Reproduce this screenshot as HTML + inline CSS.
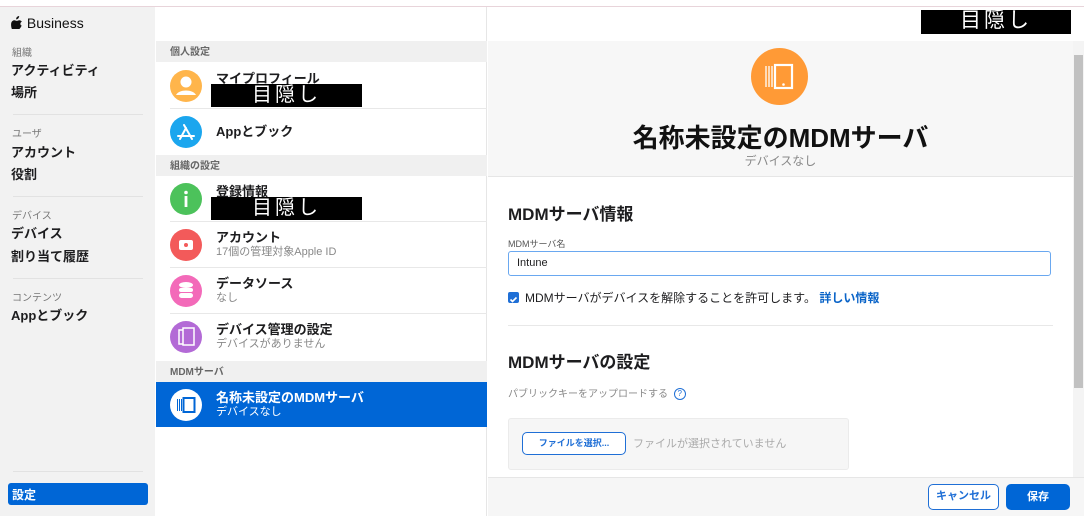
<!DOCTYPE html>
<html><head><meta charset="utf-8"><style>
*{box-sizing:border-box;margin:0;padding:0}
body{width:1084px;height:516px;overflow:hidden;background:#fff;font-family:"Liberation Sans","Noto Sans CJK JP",sans-serif;color:#1d1d1f;position:relative}
.abs{position:absolute}
.topline{left:0;top:6px;width:1084px;height:1px;background:#e8d4da}
.side{left:0;top:7px;width:155px;height:509px;background:#f2f2f2}
.side .cat{position:absolute;left:12px;font-size:10px;color:#777}
.side .it{position:absolute;left:11px;font-size:13px;font-weight:bold;color:#1d1d1f}
.side .hr{position:absolute;left:13px;width:130px;height:1px;background:#e2e2e2}
.mid{left:156px;top:7px;width:331px;height:509px;background:#fff;border-right:1px solid #e6e6e6}
.hd{position:absolute;left:0;width:331px;height:21px;background:#f0f0f0;font-size:10px;color:#666;padding:2px 14px;font-weight:bold}
.row{position:absolute;left:0;width:331px;height:45px}
.row .ic{position:absolute;left:14px;top:7px;width:32px;height:32px;border-radius:50%}
.row .t{position:absolute;left:60px;top:5px;font-size:13px;font-weight:bold}
.row .s{position:absolute;left:60px;top:21px;font-size:11px;color:#888}
.row .ln{position:absolute;left:14px;right:0;bottom:-1px;height:1px;background:#e8e8e8}
.blk{position:absolute;background:#000;color:#fff;font-size:20px;text-align:center;line-height:22px;letter-spacing:3px}
</style></head><body>
<div class="abs topline"></div>
<div class="abs side">
  <div style="position:absolute;left:11px;top:8px;font-size:14px;color:#111"><svg width="12" height="13" viewBox="0 0 12 14" style="vertical-align:-1px"><path d="M8.3 0c.1 1-.3 1.9-.9 2.6-.6.7-1.5 1.1-2.3 1-.1-.9.3-1.9.9-2.5C6.6.4 7.6 0 8.3 0zM11 10.3c-.4.9-.6 1.3-1.1 2.1-.7 1.1-1.7 2.4-2.9 2.4-1.1 0-1.4-.7-2.8-.7s-1.8.7-2.9.7C.1 14.800-.9 9.4-.1 7.2c.4-1.300 1.700-2.600 3.200-2.600 1.100 0 1.800.700 2.700.700.900 0 1.400-.700 2.700-.700 1 0 2 .500 2.700 1.400-2.400 1.300-2 4.700.800 4.300z" fill="#111"/></svg> Business</div>
  <div class="cat" style="top:37px">組織</div>
  <div class="it" style="top:53px">アクティビティ</div>
  <div class="it" style="top:75px">場所</div>
  <div class="hr" style="top:107px"></div>
  <div class="cat" style="top:118px">ユーザ</div>
  <div class="it" style="top:135px">アカウント</div>
  <div class="it" style="top:157px">役割</div>
  <div class="hr" style="top:189px"></div>
  <div class="cat" style="top:200px">デバイス</div>
  <div class="it" style="top:216px">デバイス</div>
  <div class="it" style="top:239px">割り当て履歴</div>
  <div class="hr" style="top:271px"></div>
  <div class="cat" style="top:282px">コンテンツ</div>
  <div class="it" style="top:298px">Appとブック</div>
  <div class="hr" style="top:464px"></div>
  <div style="position:absolute;left:8px;top:476px;width:140px;height:22px;background:#0066d6;border-radius:3px;color:#fff;font-size:12px;font-weight:bold;padding:3px 4px">設定</div>
</div>
<div class="abs mid">
  <div class="hd" style="top:34px">個人設定</div>
  <div class="row" style="top:56px"><div class="ic" style="background:#ffb54b"><svg width="32" height="32"><circle cx="16" cy="12" r="5.5" fill="#fff"/><path d="M6 25c3-6 17-6 20 0" fill="#fff"/></svg></div><div class="t">マイプロフィール</div><div class="ln"></div></div>
  <div class="row" style="top:102px"><div class="ic" style="background:#1ba6ee"><svg width="32" height="32" stroke="#fff" stroke-width="2" fill="none" stroke-linecap="round"><path d="M16 12l-6 11M14 9l8 14M8 20h16"/></svg></div><div class="t" style="top:12px">Appとブック</div></div>
  <div class="hd" style="top:148px">組織の設定</div>
  <div class="row" style="top:169px"><div class="ic" style="background:#4cc25b"><svg width="32" height="32"><circle cx="16" cy="9.5" r="1.8" fill="#fff"/><rect x="14.6" y="13" width="2.8" height="11" fill="#fff"/></svg></div><div class="t">登録情報</div><div class="ln"></div></div>
  <div class="row" style="top:215px"><div class="ic" style="background:#f35a5a"><svg width="32" height="32"><rect x="9" y="11" width="14" height="10" rx="2" fill="#fff"/><circle cx="16" cy="16" r="2" fill="#f35a5a"/></svg></div><div class="t">アカウント</div><div class="s">17個の管理対象Apple ID</div><div class="ln"></div></div>
  <div class="row" style="top:261px"><div class="ic" style="background:#f36ab9"><svg width="32" height="32" fill="#fff"><ellipse cx="16" cy="10" rx="7" ry="3"/><rect x="9" y="13" width="14" height="4" rx="2"/><rect x="9" y="18" width="14" height="5" rx="2.5"/></svg></div><div class="t">データソース</div><div class="s">なし</div><div class="ln"></div></div>
  <div class="row" style="top:307px"><div class="ic" style="background:#b36ad6"><svg width="32" height="32" fill="none" stroke="#fff" stroke-width="1.5"><rect x="9" y="9" width="9" height="14"/><rect x="13" y="7" width="11" height="17" fill="#b36ad6"/></svg></div><div class="t">デバイス管理の設定</div><div class="s">デバイスがありません</div></div>
  <div class="hd" style="top:354px">MDMサーバ</div>
  <div class="row" style="top:375px;background:#0066d6"><div class="ic" style="background:#fff"><svg width="32" height="32" fill="none" stroke="#0066d6" stroke-width="1"><path d="M7.5 10v12M9.5 10v12M11.5 10v12"/><rect x="13.5" y="9" width="11" height="14" stroke-width="2"/></svg></div><div class="t" style="color:#fff">名称未設定のMDMサーバ</div><div class="s" style="color:#fff">デバイスなし</div></div>
  <div class="blk" style="left:55px;top:77px;width:151px;height:23px">目隠し</div>
  <div class="blk" style="left:55px;top:190px;width:151px;height:23px">目隠し</div>
</div>
<div class="blk" style="left:921px;top:10px;width:150px;height:24px;font-size:21px">目隠し</div>
<div class="abs" style="left:488px;top:41px;width:585px;height:136px;background:#f7f7f7;border-bottom:1px solid #e6e6e6"></div>
<div class="abs" style="left:751px;top:48px;width:57px;height:57px;border-radius:50%;background:#ff9a36"><svg width="57" height="57" fill="none" stroke="#fff"><path d="M15 18v21M18 18v21M21 18v21" stroke-width="1.3"/><rect x="24" y="17" width="17" height="23" stroke-width="2.2"/><circle cx="32.5" cy="36.5" r="0.8" fill="#fff"/></svg></div>
<div class="abs" style="left:488px;top:118px;width:585px;text-align:center;font-size:26px;font-weight:bold;color:#111">名称未設定のMDMサーバ</div>
<div class="abs" style="left:488px;top:152px;width:585px;text-align:center;font-size:12px;color:#888">デバイスなし</div>
<div class="abs" style="left:508px;top:200px;font-size:17px;font-weight:bold">MDMサーバ情報</div>
<div class="abs" style="left:508px;top:237px;font-size:9px;color:#555">MDMサーバ名</div>
<div class="abs" style="left:508px;top:251px;width:543px;height:25px;border:1.5px solid #6aa8f0;border-radius:3px;font-size:11px;padding:5px 8px">Intune</div>
<div class="abs" style="left:508px;top:292px;width:11px;height:11px;background:#1f6fd6;border-radius:2px"><svg width="11" height="11"><path d="M2.5 5.5l2 2 4-4" stroke="#fff" stroke-width="1.6" fill="none"/></svg></div>
<div class="abs" style="left:525px;top:289px;font-size:12px">MDMサーバがデバイスを解除することを許可します。 <b style="color:#0a64c8">詳しい情報</b></div>
<div class="abs" style="left:508px;top:325px;width:545px;height:1px;background:#e8e8e8"></div>
<div class="abs" style="left:508px;top:348px;font-size:17px;font-weight:bold">MDMサーバの設定</div>
<div class="abs" style="left:508px;top:385px;font-size:10px;color:#888">パブリックキーをアップロードする <span style="display:inline-block;width:12px;height:12px;border:1px solid #1f6fd6;border-radius:50%;color:#1f6fd6;font-size:8px;text-align:center;line-height:10px;vertical-align:middle;margin-left:3px">?</span></div>
<div class="abs" style="left:508px;top:418px;width:341px;height:52px;background:#f6f6f6;border:1px solid #ebebeb;border-radius:3px"></div>
<div class="abs" style="left:522px;top:432px;width:104px;height:23px;background:#fff;border:1.5px solid #1f6fd6;border-radius:5px;font-size:9px;font-weight:bold;color:#1f6fd6;text-align:center;line-height:20px">ファイルを選択...</div>
<div class="abs" style="left:633px;top:435px;font-size:11px;color:#aaa">ファイルが選択されていません</div>
<div class="abs" style="left:1073px;top:41px;width:11px;height:436px;background:#f4f4f4"></div>
<div class="abs" style="left:1074px;top:55px;width:9px;height:333px;background:#c1c1c1"></div>
<div class="abs" style="left:488px;top:477px;width:596px;height:39px;background:#f6f6f6;border-top:1px solid #e6e6e6"></div>
<div class="abs" style="left:928px;top:484px;width:71px;height:26px;background:#fff;border:1.5px solid #1f6fd6;border-radius:5px;font-size:11px;font-weight:bold;color:#1f6fd6;text-align:center;line-height:23px">キャンセル</div>
<div class="abs" style="left:1006px;top:484px;width:64px;height:26px;background:#0066d6;border-radius:5px;font-size:11px;font-weight:bold;color:#fff;text-align:center;line-height:26px">保存</div>
</body></html>
